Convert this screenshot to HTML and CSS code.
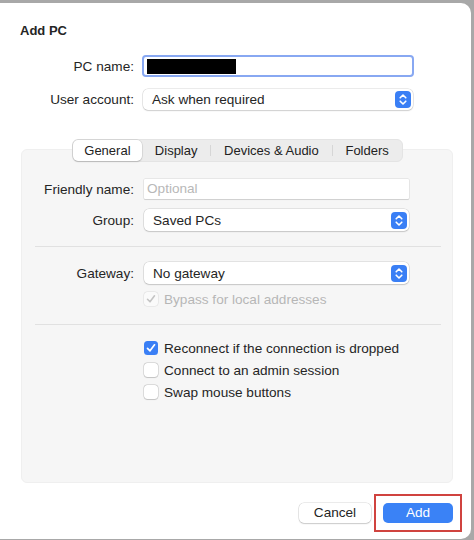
FILE: index.html
```html
<!DOCTYPE html>
<html>
<head>
<meta charset="utf-8">
<link rel="stylesheet" href="styles.css">
</head>
<body>
<div class="window">
  <div class="title">Add PC</div>

  <div class="row top-row r1">
    <div class="label">PC name:</div>
    <div class="field focus"><span class="redact"></span></div>
  </div>
  <div class="row top-row r2">
    <div class="label">User account:</div>
    <div class="popup"><span>Ask when required</span><span class="stepper"><svg width="10" height="13" viewBox="0 0 10 13"><path d="M2.2 4.8 L5 2 L7.8 4.8 M2.2 8.2 L5 11 L7.8 8.2" fill="none" stroke="#fff" stroke-width="1.6" stroke-linecap="round" stroke-linejoin="round"/></svg></span></div>
  </div>

  <div class="panel">
    <div class="segmented">
      <div class="seg selected">General</div>
      <div class="seg">Display</div>
      <div class="sep"></div>
      <div class="seg">Devices &amp; Audio</div>
      <div class="sep"></div>
      <div class="seg">Folders</div>
    </div>

    <div class="row prow friendly">
      <div class="label plabel">Friendly name:</div>
      <div class="field plain pctl"><span class="placeholder">Optional</span></div>
    </div>
    <div class="row prow group">
      <div class="label plabel">Group:</div>
      <div class="popup pctl"><span>Saved PCs</span><span class="stepper"><svg width="10" height="13" viewBox="0 0 10 13"><path d="M2.2 4.8 L5 2 L7.8 4.8 M2.2 8.2 L5 11 L7.8 8.2" fill="none" stroke="#fff" stroke-width="1.6" stroke-linecap="round" stroke-linejoin="round"/></svg></span></div>
    </div>
    <div class="divider d1"></div>
    <div class="row prow gateway">
      <div class="label plabel">Gateway:</div>
      <div class="popup pctl"><span>No gateway</span><span class="stepper"><svg width="10" height="13" viewBox="0 0 10 13"><path d="M2.2 4.8 L5 2 L7.8 4.8 M2.2 8.2 L5 11 L7.8 8.2" fill="none" stroke="#fff" stroke-width="1.6" stroke-linecap="round" stroke-linejoin="round"/></svg></span></div>
    </div>
    <div class="check-row bypass disabled">
      <span class="box checked-disabled"><svg width="14" height="14" viewBox="0 0 14 14"><path d="M3.5 7.3 L6 9.8 L10.5 3.8" fill="none" stroke="#c4c4c4" stroke-width="1.6" stroke-linecap="round" stroke-linejoin="round"/></svg></span>
      <span class="ctext">Bypass for local addresses</span>
    </div>
    <div class="divider d2"></div>
    <div class="checks">
      <div class="check-row">
        <span class="box checked"><svg width="14" height="14" viewBox="0 0 14 14"><path d="M3.5 7.3 L6 9.8 L10.5 3.8" fill="none" stroke="#fff" stroke-width="1.7" stroke-linecap="round" stroke-linejoin="round"/></svg></span>
        <span class="ctext">Reconnect if the connection is dropped</span>
      </div>
      <div class="check-row">
        <span class="box"></span>
        <span class="ctext">Connect to an admin session</span>
      </div>
      <div class="check-row">
        <span class="box"></span>
        <span class="ctext">Swap mouse buttons</span>
      </div>
    </div>
  </div>

  <div class="buttons">
    <div class="btn cancel">Cancel</div>
    <div class="highlight"><div class="btn add">Add</div></div>
  </div>
</div>
</body>
</html>
```

FILE: styles.css
```css
html, body {
  margin: 0;
  padding: 0;
}
body {
  background: #a8a8a8;
  width: 474px;
  height: 540px;
  overflow: hidden;
  font-family: "Liberation Sans", Arial, sans-serif;
  font-size: 13.6px;
  color: #252525;
}
.window {
  box-sizing: border-box;
  margin: 3px 0 0 -10px;
  width: 481px;
  height: 536px;
  background: #ffffff;
  border-radius: 10px;
  padding: 20px 0 0 30px;
}
.title {
  font-weight: bold;
  font-size: 13px;
  line-height: 16px;
  height: 16px;
}
.row {
  display: flex;
  align-items: center;
}
.label {
  box-sizing: border-box;
  text-align: right;
  white-space: nowrap;
}
.top-row .label {
  width: 114px;
  margin-right: 8px;
}
.r1 { margin-top: 16px; height: 22px; }
.r2 { margin-top: 11px; height: 22px; }
.field {
  box-sizing: border-box;
  background: #fff;
}
.focus {
  width: 272px;
  height: 22px;
  border: 2.5px solid #88a8f2;
  border-radius: 4px;
  padding: 1.5px 0 0 2.5px;
}
.redact {
  display: block;
  width: 89px;
  height: 15px;
  background: #000;
}
.popup {
  box-sizing: border-box;
  width: 270px;
  height: 21px;
  margin-left: 1px;
  background: #fff;
  border-radius: 5px;
  box-shadow: 0 0 0 0.5px rgba(0,0,0,0.16), 0 1px 1.5px rgba(0,0,0,0.12);
  display: flex;
  align-items: center;
  justify-content: space-between;
  padding: 0 2px 0 9px;
}
.stepper {
  width: 16px;
  height: 17px;
  background: #3a7ff5;
  border-radius: 4px;
  display: flex;
  align-items: center;
  justify-content: center;
}
.panel {
  box-sizing: border-box;
  margin-top: 39px;
  margin-left: 1px;
  width: 432px;
  height: 334px;
  background: #f6f6f6;
  border: 1px solid #efefef;
  border-radius: 6px;
  padding: 0 12px 0 12px;
}
.segmented {
  box-sizing: border-box;
  width: 331px;
  height: 23px;
  margin: -11px auto 0 auto;
  background: #ececec;
  border: 1px solid #e4e4e4;
  border-radius: 6px;
  display: flex;
  align-items: center;
  padding: 0;
  font-size: 13px;
}
.seg {
  height: 21px;
  line-height: 21px;
  text-align: center;
  padding: 0;
  color: #222;
  box-sizing: border-box;
  white-space: nowrap;
}
.seg.selected {
  background: #fff;
  border-radius: 5px;
  box-shadow: 0 0 0 0.5px rgba(0,0,0,0.12), 0 1px 1.5px rgba(0,0,0,0.15);
  width: 70px;
}
.seg:nth-child(2) { width: 68px; }
.seg:nth-child(4) { width: 121px; }
.seg:nth-child(6) { width: 69px; }
.sep {
  width: 1px;
  height: 11px;
  background: #d6d6d6;
}
.plabel {
  width: 100px;
  margin-right: 10px;
}
.pctl {
  width: 265px;
  margin-left: 0;
}
.friendly { margin-top: 17px; height: 20px; }
.plain {
  height: 20px;
  border-radius: 1px;
  box-shadow: 0 0 0 0.5px rgba(0,0,0,0.12), 0 1px 1px rgba(0,0,0,0.1);
  padding-left: 3px;
  line-height: 20px;
  display: flex;
  align-items: center;
}
.placeholder { color: #b8b8b8; }
.group { margin-top: 10px; height: 22px; }
.gateway { margin-top: 15px; height: 22px; }
.popup.pctl { height: 22px; }
.divider {
  height: 1px;
  background: #e1e1e1;
  margin-left: 1px;
  width: 406px;
}
.d1 { margin-top: 15px; }
.d2 { margin-top: 14px; }
.check-row {
  display: flex;
  align-items: center;
  height: 22px;
  padding-left: 110px;
}
.bypass { margin-top: 4px; }
.box {
  box-sizing: border-box;
  width: 14px;
  height: 14px;
  border-radius: 3.5px;
  background: #fff;
  box-shadow: 0 0 0 0.5px rgba(0,0,0,0.2), 0 0.5px 1px rgba(0,0,0,0.12);
  margin-right: 6px;
  flex: none;
  display: flex;
  align-items: center;
  justify-content: center;
}
.box.checked {
  background: #3a7ff5;
  box-shadow: none;
}
.box.checked-disabled {
  background: #fafafa;
  box-shadow: 0 0 0 0.5px rgba(0,0,0,0.1);
}
.disabled .ctext { color: #b6b6b6; }
.checks { margin-top: 12px; }
.buttons {
  display: flex;
  justify-content: flex-end;
  width: 433px;
  margin-top: 20px;
}
.btn {
  box-sizing: border-box;
  height: 20px;
  line-height: 20px;
  text-align: center;
  border-radius: 5px;
}
.cancel {
  width: 72px;
  background: #fff;
  box-shadow: 0 0 0 0.5px rgba(0,0,0,0.16), 0 1px 1.5px rgba(0,0,0,0.14);
  margin-right: 12px;
}
.highlight {
  outline: 2px solid #d0433f;
  outline-offset: 7px;
}
.add {
  width: 70px;
  background: #3a82f6;
  color: #fff;
}
```
